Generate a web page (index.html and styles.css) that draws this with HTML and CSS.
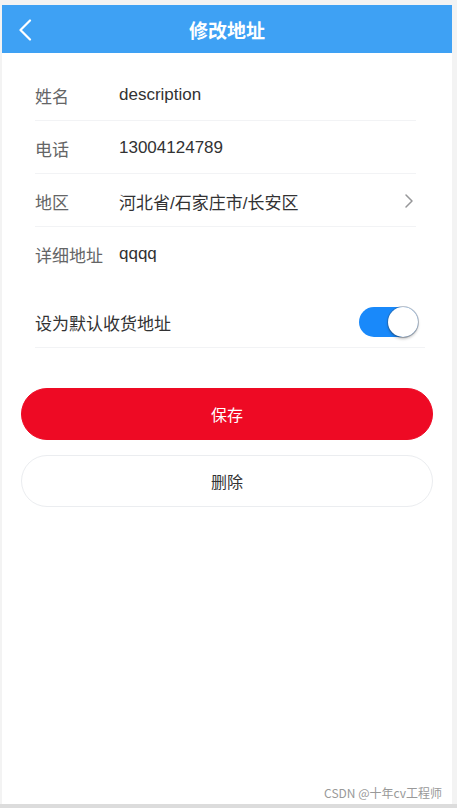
FILE: index.html
```html
<!DOCTYPE html>
<html lang="zh-CN">
<head>
<meta charset="utf-8">
<title>修改地址</title>
<link rel="stylesheet" href="styles.css">
</head>
<body>
<div class="frame">
  <div class="app">
    <header class="navbar">
      <span class="back">
        <svg width="14" height="22" viewBox="0 0 14 22"><path d="M12 1.5 L2.5 11 L12 20.5" fill="none" stroke="#fff" stroke-width="2.2" stroke-linecap="round" stroke-linejoin="round"/></svg>
      </span>
      <h1 class="title">修改地址</h1>
    </header>
    <div class="form">
      <div class="cell bordered"><span class="label">姓名</span><span class="value">description</span></div>
      <div class="cell bordered"><span class="label">电话</span><span class="value">13004124789</span></div>
      <div class="cell bordered"><span class="label">地区</span><span class="value">河北省/石家庄市/长安区</span>
        <svg class="arrow" width="10" height="16" viewBox="0 0 10 16"><path d="M2 2 L8 8 L2 14" fill="none" stroke="#969799" stroke-width="1.5" stroke-linecap="round" stroke-linejoin="round"/></svg>
      </div>
      <div class="cell"><span class="label">详细地址</span><span class="value">qqqq</span></div>
      <div class="cell default-row"><span class="default-label">设为默认收货地址</span>
        <span class="switch"><span class="knob"></span></span>
      </div>
    </div>
    <div class="buttons">
      <button class="btn save">保存</button>
      <button class="btn delete">删除</button>
    </div>
    <div class="watermark">CSDN @十年cv工程师</div>
  </div>
  <div class="bottom-strip"></div>
</div>
</body>
</html>
```
FILE: styles.css
```css
* { box-sizing: border-box; }
html, body { margin: 0; padding: 0; }
body {
  width: 457px;
  height: 808px;
  background: #f3f3f3;
  font-family: "Liberation Sans", "Noto Sans CJK SC", sans-serif;
  overflow: hidden;
}
.frame {
  display: flex;
  flex-direction: column;
  height: 808px;
  padding-top: 5px;
}
.app {
  margin-left: 2px;
  width: 450px;
  height: 799px;
  background: #fff;
  display: flex;
  flex-direction: column;
}
.bottom-strip {
  height: 4px;
  background: #dcdcdc;
}
.navbar {
  height: 48px;
  background: #3ea1f4;
  display: flex;
  align-items: center;
  position: relative;
  justify-content: center;
}
.back {
  position: absolute;
  left: 16px;
  top: 14px;
  display: flex;
}
.title {
  margin: 0;
  color: #fff;
  font-size: 19px;
  font-weight: bold;
  font-family: "Noto Sans CJK SC", sans-serif;
}
.form {
  padding: 15px 0 0 33px;
  width: 414px;
}
.cell {
  height: 52px;
  display: flex;
  align-items: center;
  font-size: 17px;
  padding-top: 2px;
}
.cell.bordered {
  height: 53px;
  border-bottom: 1px solid #f2f3f5;
}
.label {
  width: 84px;
  color: #646566;
  flex: none;
}
.value {
  color: #323233;
  flex: 1;
}
.arrow {
  margin-right: 2px;
}
.default-row {
  margin-top: 17px;
  height: 52px;
  border-bottom: 1px solid #f2f3f5;
  justify-content: space-between;
  margin-right: -9px;
  padding-top: 1px;
}
.default-label {
  color: #323233;
}
.switch {
  width: 59px;
  height: 30px;
  border-radius: 15px;
  background: #1989fa;
  position: relative;
  margin-right: 7px;
}
.knob {
  position: absolute;
  right: 0;
  top: 0;
  width: 30px;
  height: 30px;
  border-radius: 50%;
  background: #fff;
  box-shadow: 0 2px 3px rgba(0,0,0,0.25), 0 0 0 1px rgba(60,80,110,0.35);
}
.buttons {
  padding: 40px 19px 0;
  display: flex;
  flex-direction: column;
  gap: 15px;
}
.btn {
  height: 52px;
  border-radius: 26px;
  font-size: 16px;
  font-family: "Noto Sans CJK SC", sans-serif;
  border: 1px solid transparent;
  cursor: pointer;
}
.save {
  background: #ee0a24;
  border-color: #ee0a24;
  color: #fff;
}
.delete {
  background: #fff;
  border-color: #ebedf0;
  color: #323233;
}
.watermark {
  margin-top: auto;
  align-self: flex-end;
  margin-right: 10px;
  margin-bottom: 3px;
  font-size: 12px;
  color: #999;
  font-family: "Noto Sans CJK SC", sans-serif;
}
```
